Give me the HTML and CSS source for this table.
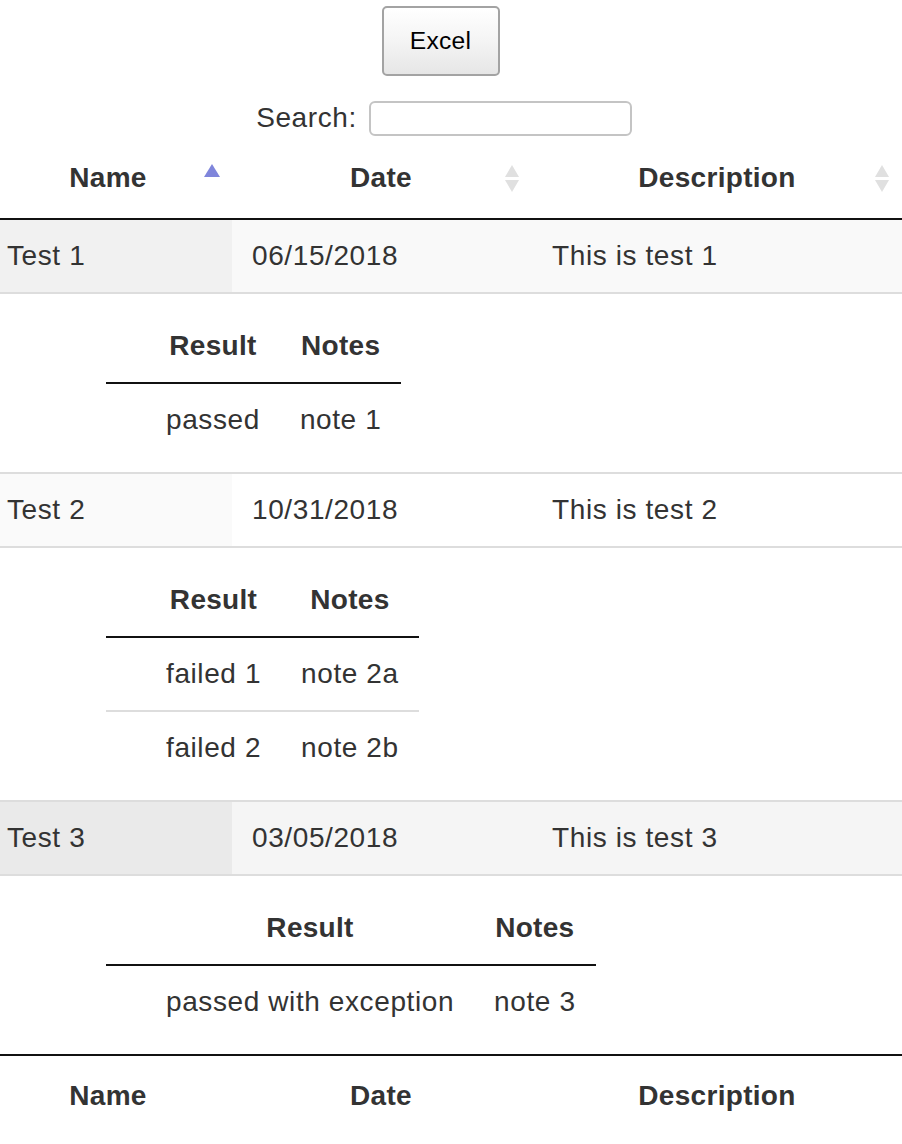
FILE: index.html
```html
<!DOCTYPE html>
<html lang="en">
<head>
<meta charset="utf-8">
<title>Tests</title>
<link rel="stylesheet" href="styles.css">
</head>
<body>
<div class="page">
  <div class="controls">
    <button class="btn-excel" type="button">Excel</button>
    <label class="search">Search:<input class="search-input" type="search"></label>
  </div>
  <table class="grid">
    <colgroup><col class="c1"><col class="c2"><col class="c3"></colgroup>
    <thead>
      <tr>
        <th class="hcell h-name"><div class="th-in"><span class="lbl">Name</span><svg class="sort" viewBox="0 0 18 30" width="18" height="30"><polygon points="9,1 17,14 1,14" fill="#7f85db"/></svg></div></th>
        <th class="hcell h-date"><div class="th-in"><span class="lbl">Date</span><svg class="sort" viewBox="0 0 18 30" width="18" height="30"><polygon points="9,2 16,14 2,14" fill="#e0e0e0"/><polygon points="2,17 16,17 9,29" fill="#e0e0e0"/></svg></div></th>
        <th class="hcell h-desc"><div class="th-in"><span class="lbl">Description</span><svg class="sort" viewBox="0 0 18 30" width="18" height="30"><polygon points="9,2 16,14 2,14" fill="#e0e0e0"/><polygon points="2,17 16,17 9,29" fill="#e0e0e0"/></svg></div></th>
      </tr>
    </thead>
    <tbody>
      <tr class="row odd first">
        <td class="cell sorted">Test 1</td><td class="cell">06/15/2018</td><td class="cell">This is test 1</td>
      </tr>
      <tr class="child">
        <td class="cell child-cell" colspan="3">
          <table class="sub">
            <thead><tr><th class="sh"></th><th class="sh">Result</th><th class="sh">Notes</th></tr></thead>
            <tbody>
              <tr class="srow"><td class="sd"></td><td class="sd">passed</td><td class="sd">note 1</td></tr>
            </tbody>
          </table>
        </td>
      </tr>
      <tr class="row even">
        <td class="cell sorted">Test 2</td><td class="cell">10/31/2018</td><td class="cell">This is test 2</td>
      </tr>
      <tr class="child">
        <td class="cell child-cell" colspan="3">
          <table class="sub">
            <thead><tr><th class="sh"></th><th class="sh">Result</th><th class="sh">Notes</th></tr></thead>
            <tbody>
              <tr class="srow"><td class="sd"></td><td class="sd">failed 1</td><td class="sd">note 2a</td></tr>
              <tr class="srow"><td class="sd"></td><td class="sd">failed 2</td><td class="sd">note 2b</td></tr>
            </tbody>
          </table>
        </td>
      </tr>
      <tr class="row hover">
        <td class="cell sorted">Test 3</td><td class="cell">03/05/2018</td><td class="cell">This is test 3</td>
      </tr>
      <tr class="child">
        <td class="cell child-cell" colspan="3">
          <table class="sub">
            <thead><tr><th class="sh"></th><th class="sh">Result</th><th class="sh">Notes</th></tr></thead>
            <tbody>
              <tr class="srow"><td class="sd"></td><td class="sd">passed with exception</td><td class="sd">note 3</td></tr>
            </tbody>
          </table>
        </td>
      </tr>
    </tbody>
    <tfoot>
      <tr>
        <th class="fcell h-name"><div class="th-in"><span class="lbl">Name</span><span class="spacer"></span></div></th>
        <th class="fcell h-date"><div class="th-in"><span class="lbl">Date</span><span class="spacer"></span></div></th>
        <th class="fcell h-desc"><div class="th-in"><span class="lbl">Description</span><span class="spacer"></span></div></th>
      </tr>
    </tfoot>
  </table>
</div>
</body>
</html>
```
FILE: styles.css
```css
html, body {
  margin: 0;
  padding: 0;
  background: #fff;
}
body {
  font-family: "Liberation Sans", Arial, Helvetica, sans-serif;
  font-size: 28px;
  color: #333;
  letter-spacing: 0.6px;
}
.page {
  width: 902px;
}
.controls {
  display: flex;
  flex-direction: column;
  align-items: center;
  padding-top: 6px;
}
.btn-excel {
  width: 118px;
  height: 70px;
  margin-right: 21px;
  border: 2px solid #a3a3a3;
  border-radius: 5px;
  background: linear-gradient(to bottom, #ffffff 0%, #f4f4f4 50%, #e6e6e6 100%);
  font-family: "Liberation Sans", Arial, Helvetica, sans-serif;
  font-size: 24.6px;
  letter-spacing: 0.3px;
  color: #000;
  padding: 0;
}
.search {
  display: flex;
  align-items: center;
  height: 40px;
  margin-top: 22px;
  margin-right: 14px;
  line-height: 40px;
}
.search-input {
  width: 263px;
  height: 35px;
  box-sizing: border-box;
  margin: 0 0 0 12px;
  border: 2px solid #c4c4c4;
  border-radius: 6px;
  background: #fff;
  padding: 4px 8px;
}
.grid {
  width: 902px;
  table-layout: fixed;
  border-collapse: separate;
  border-spacing: 0;
}
.c1 { width: 232px; }
.c2 { width: 300px; }
.c3 { width: 370px; }
.hcell, .fcell {
  font-weight: bold;
  line-height: 40px;
  padding: 20px 11px 20px 20px;
  color: #333;
  letter-spacing: 0.3px;
}
.hcell {
  border-bottom: 2px solid #111;
}
.fcell {
  border-top: 2px solid #111;
  padding-bottom: 12px;
}
.th-in {
  display: flex;
  align-items: center;
}
.lbl {
  flex: 1;
  text-align: center;
  white-space: nowrap;
}
.h-name .lbl { padding-right: 7px; }
.h-date .lbl { padding-left: 7px; }
.h-desc .lbl { padding-left: 9px; }
.sort {
  flex: none;
  display: block;
}
.spacer {
  flex: none;
  width: 18px;
}
.cell {
  padding: 16px 20px;
  line-height: 40px;
  border-top: 2px solid #ddd;
  text-align: left;
  white-space: nowrap;
}
.cell.sorted {
  padding-left: 7px;
}
.row.first .cell {
  border-top: none;
}
.row.odd .cell { background: #f9f9f9; }
.row.odd .cell.sorted { background: #f1f1f1; }
.row.even .cell { background: #fff; }
.row.even .cell.sorted { background: #fafafa; }
.row.hover .cell { background: #f5f5f5; }
.row.hover .cell.sorted { background: #eaeaea; }
.child-cell {
  background: #fff;
}
.sub {
  margin-left: 86px;
  border-collapse: separate;
  border-spacing: 0;
}
.sh {
  padding: 16px 20px;
  line-height: 40px;
  font-weight: bold;
  text-align: center;
  border-bottom: 2px solid #111;
  white-space: nowrap;
  letter-spacing: 0.3px;
}
.sd {
  padding: 16px 20px;
  line-height: 40px;
  text-align: left;
  white-space: nowrap;
}
.srow + .srow .sd {
  border-top: 2px solid #ddd;
}
```
